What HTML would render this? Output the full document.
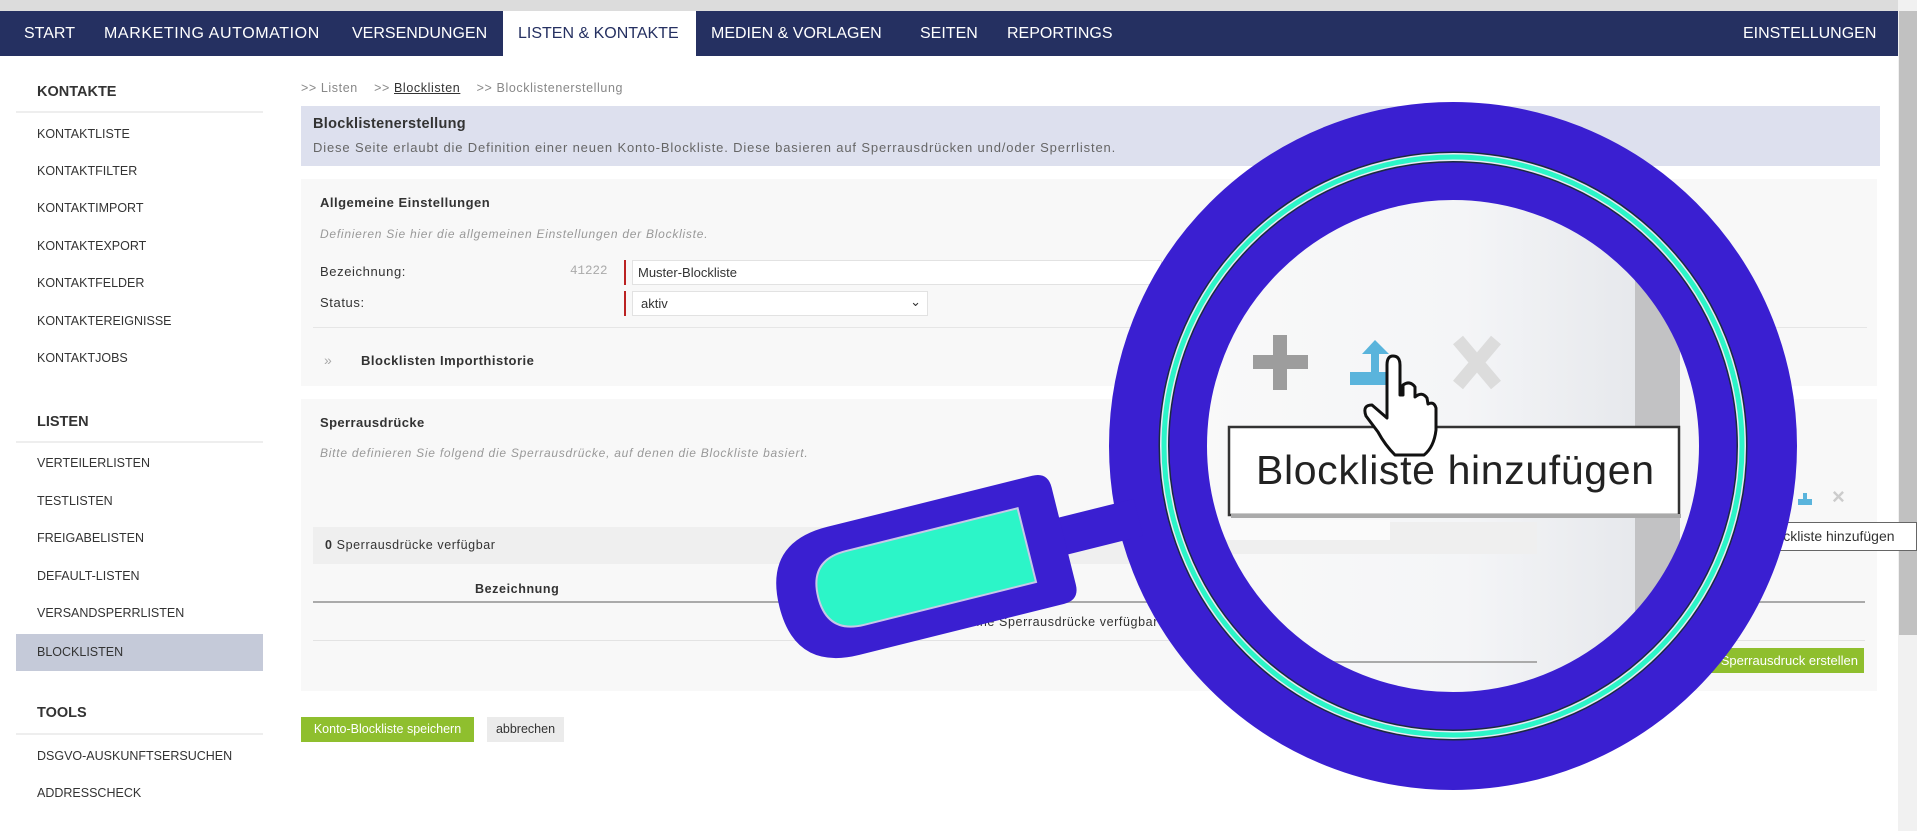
<!DOCTYPE html>
<html><head><meta charset="utf-8"><style>
*{margin:0;padding:0;box-sizing:border-box}
body{width:1917px;height:831px;position:relative;overflow:hidden;background:#fff;font-family:"Liberation Sans",sans-serif;color:#333}
.a{position:absolute;white-space:nowrap}
.nav{position:absolute;left:0;top:11px;width:1898px;height:45px;background:#253061}
.nav span{position:absolute;top:0;line-height:45px;font-size:16px;color:#fff}
.side{font-size:12.5px;color:#333;left:37px}
.sh{font-size:14.5px;font-weight:bold;left:37px;color:#333}
.line{position:absolute;height:2px;background:#eee}
.ls{letter-spacing:0.6px}
</style></head><body>
<div class="a" style="left:0;top:0;width:1917px;height:11px;background:#dcdcdc"></div>
<div class="nav">
<span style="left:24px">START</span>
<span style="left:104px;letter-spacing:0.6px">MARKETING AUTOMATION</span>
<span style="left:352px">VERSENDUNGEN</span>
<span style="left:503px;width:193px;height:45px;background:#fff"></span>
<span style="left:518px;color:#253061">LISTEN &amp; KONTAKTE</span>
<span style="left:711px">MEDIEN &amp; VORLAGEN</span>
<span style="left:920px">SEITEN</span>
<span style="left:1007px">REPORTINGS</span>
<span style="left:1743px">EINSTELLUNGEN</span>
</div>
<div class="a" style="left:1898px;top:0;width:19px;height:831px;background:#f1f1f1"></div>
<div class="a" style="left:1899px;top:11px;width:18px;height:624px;background:#c1c1c1"></div>

<!-- sidebar -->
<div class="a sh" style="top:84px">KONTAKTE</div>
<div class="line" style="left:16px;top:111px;width:247px"></div>
<div class="a side" style="top:127px">KONTAKTLISTE</div>
<div class="a side" style="top:164px">KONTAKTFILTER</div>
<div class="a side" style="top:201px">KONTAKTIMPORT</div>
<div class="a side" style="top:239px">KONTAKTEXPORT</div>
<div class="a side" style="top:276px">KONTAKTFELDER</div>
<div class="a side" style="top:314px">KONTAKTEREIGNISSE</div>
<div class="a side" style="top:351px">KONTAKTJOBS</div>
<div class="a sh" style="top:414px">LISTEN</div>
<div class="line" style="left:16px;top:441px;width:247px"></div>
<div class="a side" style="top:456px">VERTEILERLISTEN</div>
<div class="a side" style="top:494px">TESTLISTEN</div>
<div class="a side" style="top:531px">FREIGABELISTEN</div>
<div class="a side" style="top:569px">DEFAULT-LISTEN</div>
<div class="a side" style="top:606px">VERSANDSPERRLISTEN</div>
<div class="a" style="left:16px;top:634px;width:247px;height:37px;background:#c5cad9"></div>
<div class="a side" style="top:645px">BLOCKLISTEN</div>
<div class="a sh" style="top:705px">TOOLS</div>
<div class="line" style="left:16px;top:733px;width:247px"></div>
<div class="a side" style="top:749px">DSGVO-AUSKUNFTSERSUCHEN</div>
<div class="a side" style="top:786px">ADDRESSCHECK</div>

<!-- main -->
<div class="a ls" style="left:301px;top:81px;font-size:12.5px;color:#888">&gt;&gt; Listen &nbsp;&nbsp; &gt;&gt; <span style="color:#333;text-decoration:underline">Blocklisten</span> &nbsp;&nbsp; &gt;&gt; Blocklistenerstellung</div>
<div class="a" style="left:301px;top:106px;width:1579px;height:60px;background:#dde0ee"></div>
<div class="a" style="left:313px;top:116px;font-size:14.5px;font-weight:bold;color:#333;letter-spacing:0.3px">Blocklistenerstellung</div>
<div class="a" style="left:313px;top:140px;font-size:13px;color:#666;letter-spacing:0.85px">Diese Seite erlaubt die Definition einer neuen Konto-Blockliste. Diese basieren auf Sperrausdrücken und/oder Sperrlisten.</div>

<div class="a" style="left:301px;top:179px;width:1576px;height:207px;background:#f8f8f8"></div>
<div class="a" style="left:320px;top:195px;font-size:13px;font-weight:bold;letter-spacing:0.5px">Allgemeine Einstellungen</div>
<div class="a" style="left:320px;top:227px;font-size:12px;font-style:italic;color:#999;letter-spacing:0.75px">Definieren Sie hier die allgemeinen Einstellungen der Blockliste.</div>
<div class="a ls" style="left:320px;top:264px;font-size:13px">Bezeichnung:</div>
<div class="a" style="left:570px;top:264px;font-size:12.5px;color:#aaa;font-family:'Liberation Mono',monospace">41222</div>
<div class="a" style="left:624px;top:260px;width:2px;height:25px;background:#b22"></div>
<div class="a" style="left:632px;top:260px;width:530px;height:25px;background:#fff;border:1px solid #e2e2e2;font-size:13px;padding:4px 5px">Muster-Blockliste</div>
<div class="a ls" style="left:320px;top:295px;font-size:13px">Status:</div>
<div class="a" style="left:624px;top:291px;width:2px;height:25px;background:#b22"></div>
<div class="a" style="left:632px;top:291px;width:296px;height:25px;background:#fff;border:1px solid #e2e2e2;font-size:13px;padding:4px 8px">aktiv<span style="position:absolute;right:6px;top:2px;font-size:13px">&#8964;</span></div>
<div class="line" style="left:313px;top:327px;width:1554px;height:1px;background:#e6e6e6"></div>
<div class="a" style="left:324px;top:352px;font-size:14px;color:#aaa">»</div>
<div class="a" style="left:361px;top:353px;font-size:13px;font-weight:bold;letter-spacing:0.5px">Blocklisten Importhistorie</div>

<div class="a" style="left:301px;top:399px;width:1576px;height:292px;background:#f8f8f8"></div>
<div class="a" style="left:320px;top:415px;font-size:13px;font-weight:bold;letter-spacing:0.4px">Sperrausdrücke</div>
<div class="a" style="left:320px;top:446px;font-size:12px;font-style:italic;color:#999;letter-spacing:0.75px">Bitte definieren Sie folgend die Sperrausdrücke, auf denen die Blockliste basiert.</div>
<div class="a" style="left:313px;top:527px;width:1224px;height:37px;background:#efefef"></div>
<div class="a ls" style="left:325px;top:538px;font-size:12.5px"><b>0</b> Sperrausdrücke verfügbar</div>
<div class="a ls" style="left:475px;top:582px;font-size:12.5px;font-weight:bold">Bezeichnung</div>
<div class="line" style="left:313px;top:601px;width:1552px;background:#aaa"></div>
<div class="a ls" style="left:960px;top:615px;font-size:12.5px">Keine Sperrausdrücke verfügbar</div>
<div class="line" style="left:313px;top:640px;width:1552px;height:1px;background:#e3e3e3"></div>
<div class="line" style="left:1277px;top:661px;width:260px;background:#aaa"></div>
<div class="a" style="left:1640px;top:648px;width:224px;height:25px;background:#8fbf2e;color:#fff;font-size:13px;line-height:25px;text-align:right;padding-right:6px">Neuen Sperrausdruck erstellen</div>
<!-- small icons -->
<div class="a" style="left:1798px;top:499px;width:14px;height:6px;background:#5ab4dc"></div>
<div class="a" style="left:1803px;top:493px;width:4px;height:7px;background:#5ab4dc"></div>
<div class="a" style="left:1832px;top:484px;font-size:22px;color:#ccc;font-weight:bold">×</div>
<div class="a" style="left:1752px;top:522px;width:165px;height:29px;background:#fff;border:1px solid #666;font-size:14px;line-height:27px;padding-left:10px">Blockliste hinzufügen</div>

<div class="a" style="left:301px;top:717px;width:173px;height:25px;background:#8fbf2e;color:#fff;font-size:12.5px;line-height:25px;text-align:center">Konto-Blockliste speichern</div>
<div class="a" style="left:487px;top:717px;width:77px;height:25px;background:#ebebeb;font-size:12.5px;line-height:25px;text-align:center">abbrechen</div>

<svg class="a" style="left:0;top:0" width="1917" height="831" xmlns="http://www.w3.org/2000/svg">
<defs>
<clipPath id="c"><circle cx="1453" cy="446" r="247"/></clipPath>
<linearGradient id="g" x1="0" x2="1" y1="0" y2="0"><stop offset="0" stop-color="#f9f9f9"/><stop offset="0.6" stop-color="#f4f5f7"/><stop offset="1" stop-color="#e6e8ec"/></linearGradient>
</defs>
<g clip-path="url(#c)">
<rect x="1200" y="190" width="440" height="520" fill="url(#g)"/>
<rect x="1200" y="522" width="337" height="32" fill="#efefef"/>
<rect x="1200" y="520" width="190" height="20" fill="#fafafa"/>
<rect x="1277" y="661" width="260" height="2" fill="#aaa"/>
<rect x="1635" y="274" width="45" height="337" fill="#c2c2c4"/>
<rect x="1680" y="190" width="30" height="520" fill="#f6f6f6"/>
<rect x="1253" y="355" width="55" height="14" fill="#9d9d9d"/>
<rect x="1273" y="335" width="14" height="55" fill="#9d9d9d"/>
<path d="M1458 340 L1496 385 M1496 340 L1458 385" stroke="#dcdcdc" stroke-width="13"/>
<rect x="1350" y="372" width="38" height="13" fill="#5ab4dc"/>
<rect x="1371" y="352" width="8" height="22" fill="#5ab4dc"/>
<path d="M1362 354 L1375 340 L1389 354 Z" fill="#5ab4dc"/>
<rect x="1229" y="427" width="450" height="88" fill="#fff" stroke="#333" stroke-width="2.5"/>
<rect x="1231" y="514" width="450" height="4" fill="#aaa"/>
<text x="1256" y="484" font-family="Liberation Sans, sans-serif" font-size="41" fill="#222" textLength="398">Blockliste hinzufügen</text>
<path d="M1387 365 Q1387 356 1393 356 Q1400 356 1400 365 L1400 395 L1403 395 L1403 385 Q1410 380 1415 387 L1415 397 Q1422 391 1427 398 L1428 404 Q1434 401 1436 408 L1436 430 Q1434 447 1424 455 L1395 455 Q1385 445 1378 432 L1366 416 Q1362 405 1372 405 L1387 418 Z" fill="#fff" stroke="#111" stroke-width="3" stroke-linejoin="round"/>
</g>
<circle cx="1453" cy="446" r="295" fill="none" stroke="#3a1fd1" stroke-width="98"/>
<circle cx="1453" cy="446" r="289" fill="none" stroke="#1a2a40" stroke-width="11"/>
<circle cx="1453" cy="446" r="289" fill="none" stroke="#e8e8f4" stroke-width="8"/>
<circle cx="1453" cy="446" r="289" fill="none" stroke="#2cf5c8" stroke-width="5"/>
<g transform="rotate(-14 923 571)">
<rect x="1055" y="552" width="90" height="38" fill="#3a1fd1"/>
<path d="M841 505 L1052 505 Q1068 505 1068 521 L1068 621 Q1068 637 1052 637 L841 637 Q775 637 775 571 Q775 505 841 505 Z" fill="#3a1fd1"/>
<path d="M853 533 L1030 533 L1030 609 L853 609 Q815 609 815 571 Q815 533 853 533 Z" fill="#2cf5c8" stroke="#c8c8e8" stroke-width="2"/>
</g>
</svg>
</body></html>
